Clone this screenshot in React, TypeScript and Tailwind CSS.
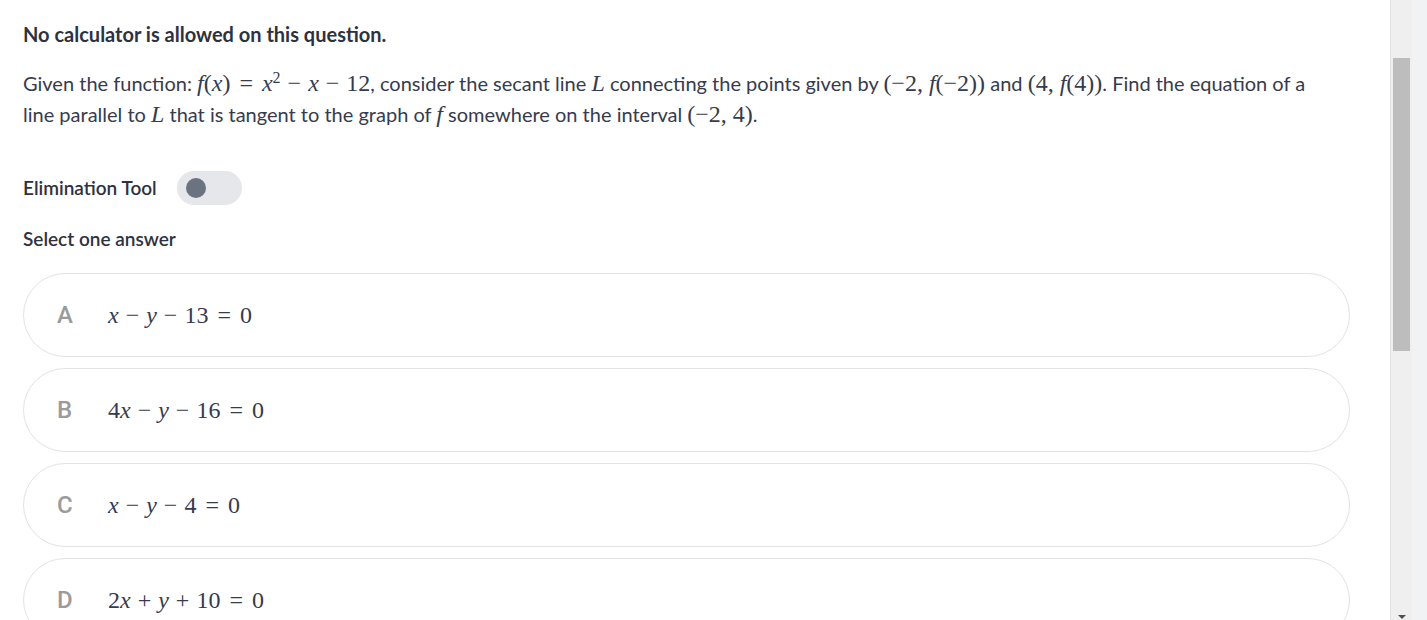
const serif = { fontFamily: '"Liberation Serif", "DejaVu Serif", serif' };

const V = ({ children }: { children: React.ReactNode }) => <i className="italic">{children}</i>;
const Bin = ({ children }: { children: React.ReactNode }) => <span className="mx-[7px]">{children}</span>;
const Rel = ({ children }: { children: React.ReactNode }) => <span className="mx-[9px]">{children}</span>;
const Comma = () => <span className="mr-[6px]">,</span>;

const M = ({ children }: { children: React.ReactNode }) => (
  <span className="text-[24px] leading-none whitespace-nowrap" style={serif}>
    {children}
  </span>
);

const options: { letter: string; expr: React.ReactNode }[] = [
  {
    letter: "A",
    expr: (
      <>
        <V>x</V>
        <Bin>−</Bin>
        <V>y</V>
        <Bin>−</Bin>13<Rel>=</Rel>0
      </>
    ),
  },
  {
    letter: "B",
    expr: (
      <>
        4<V>x</V>
        <Bin>−</Bin>
        <V>y</V>
        <Bin>−</Bin>16<Rel>=</Rel>0
      </>
    ),
  },
  {
    letter: "C",
    expr: (
      <>
        <V>x</V>
        <Bin>−</Bin>
        <V>y</V>
        <Bin>−</Bin>4<Rel>=</Rel>0
      </>
    ),
  },
  {
    letter: "D",
    expr: (
      <>
        2<V>x</V>
        <Bin>+</Bin>
        <V>y</V>
        <Bin>+</Bin>10<Rel>=</Rel>0
      </>
    ),
  },
];

const App = () => {
  return (
    <div className="flex h-[620px] w-full overflow-hidden bg-white" style={{ fontFamily: 'Lato, "Open Sans", sans-serif' }}>
      {/* Question body */}
      <div className="flex-1 pl-[23px] pr-[40px] pt-[21px] text-[#363b4e]">
        <h2 className="text-[20px] font-bold leading-[26px] text-[#2e3240]">No calculator is allowed on this question.</h2>

        <p className="mt-[21px] whitespace-nowrap text-[20px] leading-[31px]">
          Given the function:{" "}
          <M>
            <V>f</V>(<V>x</V>)<Rel>=</Rel>
            <V>x</V>
            <sup className="text-[16px]">2</sup>
            <Bin>−</Bin>
            <V>x</V>
            <Bin>−</Bin>12
          </M>
          , consider the secant line{" "}
          <M>
            <V>L</V>
          </M>{" "}
          connecting the points given by{" "}
          <M>
            (−2<Comma />
            <V>f</V>(−2))
          </M>{" "}
          and{" "}
          <M>
            (4<Comma />
            <V>f</V>(4))
          </M>
          . Find the equation of a
          <br />
          line parallel to{" "}
          <M>
            <V>L</V>
          </M>{" "}
          that is tangent to the graph of{" "}
          <M>
            <V>f</V>
          </M>{" "}
          somewhere on the interval{" "}
          <M>
            (−2<Comma />
            4)
          </M>
          .
        </p>

        <div className="mt-[41px] flex items-center gap-[20px]">
          <span className="text-[19px] font-semibold text-[#2e3240]">Elimination Tool</span>
          <div className="flex h-[34px] w-[65px] items-center rounded-full bg-[#e5e7eb] pl-[9px]">
            <div className="h-[20px] w-[20px] rounded-full bg-[#6b7280]" />
          </div>
        </div>

        <div className="mt-[21px] text-[19px] font-semibold leading-[26px] text-[#2e3240]">Select one answer</div>

        <div className="mt-[21px] flex flex-col gap-[11px]">
          {options.map((o) => (
            <div
              key={o.letter}
              className="flex h-[84px] items-center rounded-full border border-[#e3e3e3] bg-white pl-[33px]"
            >
              <span
                className="w-[51px] text-[24px] font-medium text-[#9b9b9b]"
                style={{ fontFamily: 'Roboto, "Liberation Sans", Arial, sans-serif' }}
              >
                {o.letter}
              </span>
              <M>{o.expr}</M>
            </div>
          ))}
        </div>
      </div>

      {/* Scrollbar */}
      <div className="flex h-full w-[22px] flex-col border-l border-[#e2e2e2] bg-[#efefef] pl-[2px]">
        <div className="mt-[58px] h-[293px] w-[17px] bg-[#bdbdbd]" />
        <div className="mt-auto mb-[1px] flex w-[17px] justify-center">
          <div className="h-0 w-0 border-x-[4px] border-t-[4px] border-x-transparent border-t-[#505050]" />
        </div>
      </div>
      <div className="h-full w-[15px] bg-[#f1f2f4]" />
    </div>
  );
};

export default App;
